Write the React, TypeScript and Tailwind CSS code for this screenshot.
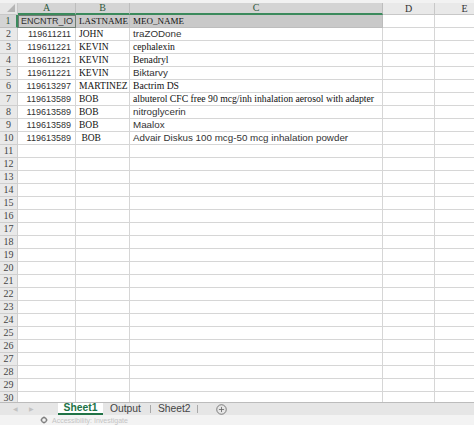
import React from "react";

const SERIF = "font-['Liberation_Serif',serif]";
const SANS = "font-['Liberation_Sans',Arial,sans-serif]";

type Cell = { t: string; f: "s" | "r" };
const rows: [Cell, Cell, Cell][] = [
  [{ t: "ENCNTR_IO", f: "s" }, { t: "LASTNAME", f: "r" }, { t: "MEO_NAME", f: "r" }],
  [{ t: "119611211", f: "s" }, { t: "JOHN", f: "r" }, { t: "traZODone", f: "s" }],
  [{ t: "119611221", f: "s" }, { t: "KEVIN", f: "r" }, { t: "cephalexin", f: "r" }],
  [{ t: "119611221", f: "s" }, { t: "KEVIN", f: "r" }, { t: "Benadryl", f: "r" }],
  [{ t: "119611221", f: "s" }, { t: "KEVIN", f: "r" }, { t: "Biktarvy", f: "s" }],
  [{ t: "119613297", f: "s" }, { t: "MARTINEZ", f: "r" }, { t: "Bactrim DS", f: "r" }],
  [{ t: "119613589", f: "s" }, { t: "BOB", f: "r" }, { t: "albuterol CFC free 90 mcg/inh inhalation aerosol with adapter", f: "r" }],
  [{ t: "119613589", f: "s" }, { t: "BOB", f: "r" }, { t: "nitroglycerin", f: "s" }],
  [{ t: "119613589", f: "s" }, { t: "BOB", f: "r" }, { t: "Maalox", f: "s" }],
  [{ t: "119613589", f: "s" }, { t: "\u00a0BOB", f: "r" }, { t: "Advair Diskus 100 mcg-50 mcg inhalation powder", f: "s" }],
];

function fontCls(f: "s" | "r") {
  return f === "s" ? `${SANS} text-[#333] text-[9px]` : `${SERIF} text-[#111] text-[9px]`;
}

function bFont(i: number) {
  return i === 0 ? `${SERIF} text-[#111] text-[9px]` : `${SERIF} text-[#111] text-[9.5px]`;
}

function cFont(f: "s" | "r", i: number) {
  if (i === 0) return `${SERIF} text-[#111] text-[9px]`;
  return f === "s"
    ? `${SANS} text-[#333] text-[9.8px]`
    : `${SERIF} text-[#111] text-[9.7px]`;
}

export default function App() {
  const total = 30;
  return (
    <div className="w-[474px] h-[425px] overflow-hidden bg-white flex flex-col select-none">
      {/* grid area */}
      <div className="flex-1 overflow-hidden relative">
        {/* top strip */}
        <div className="h-[3px] bg-[#f2f2f2] w-[520px]" />
        {/* column header row */}
        <div className={`flex h-[12px] w-[520px] text-[10px] leading-none ${SERIF}`}>
          <div className="w-[18px] shrink-0 bg-[#e6e6e6] border-r border-b border-[#c8c8c8] relative">
            <svg className="absolute right-[2px] bottom-[2px]" width="8" height="8" viewBox="0 0 8 8">
              <polygon points="8,0 8,8 0,8" fill="#b5b5b5" />
            </svg>
          </div>
          <div className="w-[58px] shrink-0 bg-[#d4d4d4] border-r border-[#bdbdbd] border-b-2 border-b-[#3b8a5c] flex items-center justify-center text-[#2f5a40]">A</div>
          <div className="w-[54px] shrink-0 bg-[#d4d4d4] border-r border-[#bdbdbd] border-b-2 border-b-[#3b8a5c] flex items-center justify-center text-[#2f5a40]">B</div>
          <div className="w-[253px] shrink-0 bg-[#d4d4d4] border-r border-[#bdbdbd] border-b-2 border-b-[#3b8a5c] flex items-center justify-center text-[#2f5a40]">C</div>
          <div className="w-[52px] shrink-0 bg-[#e9e9e9] border-r border-b border-[#c8c8c8] flex items-center justify-center text-[#333]">D</div>
          <div className="w-[60px] shrink-0 bg-[#e9e9e9] border-r border-b border-[#c8c8c8] flex items-center justify-center text-[#333]">E</div>
        </div>
        {/* rows */}
        {Array.from({ length: total }).map((_, i) => {
          const r = rows[i];
          const sel = i === 0;
          return (
            <div key={i} className="flex h-[13px] w-[520px] leading-none">
              <div
                className={`w-[18px] shrink-0 border-b flex items-end justify-center pb-[1px] text-[10px] ${SERIF} ${
                  sel
                    ? "bg-[#d4d4d4] border-[#bdbdbd] border-r-2 border-r-[#3b8a5c] text-[#2f5a40]"
                    : "bg-[#e9e9e9] border-[#cfcfcf] border-r text-[#444]"
                }`}
              >
                {i + 1}
              </div>
              <div
                className={`w-[58px] shrink-0 border-r border-b flex items-end pb-[1px] ${
                  sel
                    ? "bg-[#c9c9c9] border border-[#6f7d74] justify-start pl-[2px]"
                    : "border-[#d6d6d6] justify-end pr-[4px]"
                } ${r ? fontCls(r[0].f) : ""}`}
              >
                {r ? r[0].t : ""}
              </div>
              <div
                className={`w-[54px] shrink-0 border-r border-b flex items-end pb-[1px] pl-[3px] whitespace-nowrap overflow-visible ${
                  sel ? "bg-[#c9c9c9] border-[#bdbdbd]" : "border-[#d6d6d6]"
                } ${r ? bFont(i) : ""}`}
              >
                {r ? r[1].t : ""}
              </div>
              <div
                className={`w-[253px] shrink-0 border-r border-b flex items-end pb-[1px] pl-[3px] whitespace-nowrap ${
                  sel ? "bg-[#c9c9c9] border-[#bdbdbd]" : "border-[#d6d6d6]"
                } ${r ? cFont(r[2].f, i) : ""}`}
              >
                {r ? r[2].t : ""}
              </div>
              <div className="w-[52px] shrink-0 border-r border-b border-[#d6d6d6]" />
              <div className="w-[60px] shrink-0 border-r border-b border-[#d6d6d6]" />
            </div>
          );
        })}
      </div>
      {/* sheet tabs bar */}
      <div className={`h-[13px] shrink-0 bg-[#e6e6e6] border-t border-[#bcbcbc] flex items-stretch text-[10.3px] leading-none ${SANS}`}>
        <div className="w-[58px] shrink-0 flex items-center pl-[13px] gap-[11px] text-[#c2c2c2] text-[6px]">
          <span>◀</span>
          <span>▶</span>
        </div>
        <div className="w-[45px] shrink-0 bg-white border-b-2 border-[#217346] flex items-center justify-center font-bold text-[#217346]">
          Sheet1
        </div>
        <div className="flex items-center pl-[7px] text-[#444]">Output</div>
        <div className="w-px h-[8px] bg-[#a8a8a8] self-center ml-[9px]" />
        <div className="flex items-center pl-[7px] text-[#444]">Sheet2</div>
        <div className="w-px h-[8px] bg-[#a8a8a8] self-center ml-[6px]" />
        <div className="flex items-center pl-[18px]">
          <svg width="11" height="11" viewBox="0 0 12 12">
            <circle cx="6" cy="6" r="5.2" fill="none" stroke="#666" strokeWidth="0.9" />
            <path d="M6 3.2v5.6M3.2 6h5.6" stroke="#666" strokeWidth="0.9" />
          </svg>
        </div>
      </div>
      {/* status bar */}
      <div className="h-[10px] shrink-0 bg-[#f3f3f3] overflow-hidden flex items-center pl-[40px] gap-[4px]">
        <svg width="8" height="8" viewBox="0 0 10 10">
          <circle cx="5" cy="5" r="3" fill="none" stroke="#777" strokeWidth="1.4" />
          <path d="M5 0.5v2M5 7.5v2M0.5 5h2M7.5 5h2" stroke="#777" strokeWidth="1.2" />
        </svg>
        <span className={`text-[7px] leading-none text-[#c4c4c4] ${SANS}`}>Accessibility: Investigate</span>
      </div>
    </div>
  );
}
